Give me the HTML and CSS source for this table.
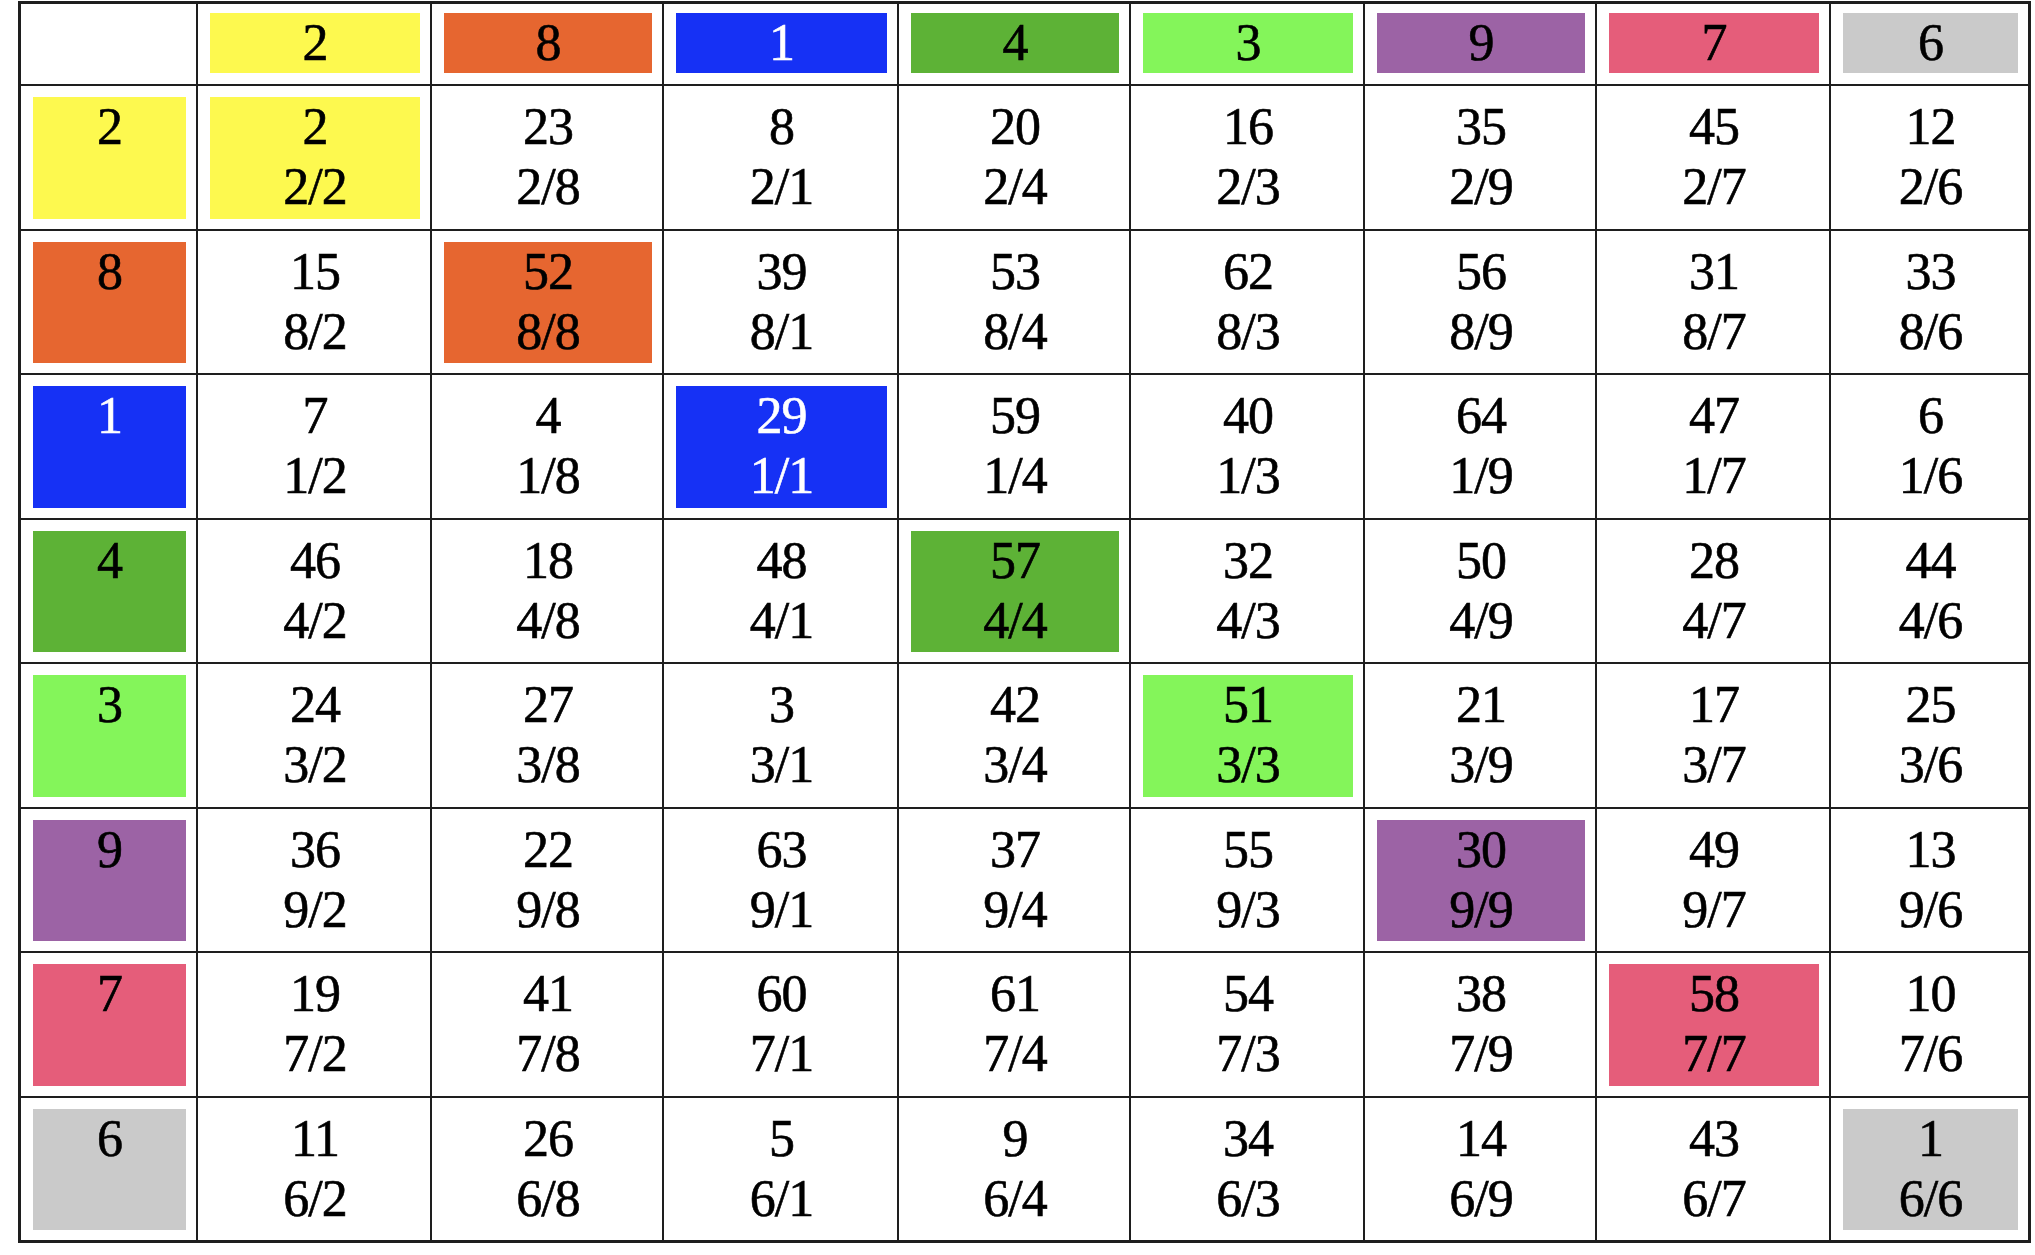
FILE: index.html
```html
<!DOCTYPE html>
<html>
<head>
<meta charset="utf-8">
<title>Table</title>
<link rel="stylesheet" href="styles.css">
</head>
<body>
<div class="grid">
  <div class="cell head"></div>
  <div class="cell head"><div class="box c2">2</div></div>
  <div class="cell head"><div class="box c8">8</div></div>
  <div class="cell head"><div class="box c1">1</div></div>
  <div class="cell head"><div class="box c4">4</div></div>
  <div class="cell head"><div class="box c3">3</div></div>
  <div class="cell head"><div class="box c9">9</div></div>
  <div class="cell head"><div class="box c7">7</div></div>
  <div class="cell head"><div class="box c6">6</div></div>

  <div class="cell"><div class="box c2">2</div></div>
  <div class="cell"><div class="box c2">2<br>2/2</div></div>
  <div class="cell"><div class="box">23<br>2/8</div></div>
  <div class="cell"><div class="box">8<br>2/1</div></div>
  <div class="cell"><div class="box">20<br>2/4</div></div>
  <div class="cell"><div class="box">16<br>2/3</div></div>
  <div class="cell"><div class="box">35<br>2/9</div></div>
  <div class="cell"><div class="box">45<br>2/7</div></div>
  <div class="cell"><div class="box">12<br>2/6</div></div>

  <div class="cell"><div class="box c8">8</div></div>
  <div class="cell"><div class="box">15<br>8/2</div></div>
  <div class="cell"><div class="box c8">52<br>8/8</div></div>
  <div class="cell"><div class="box">39<br>8/1</div></div>
  <div class="cell"><div class="box">53<br>8/4</div></div>
  <div class="cell"><div class="box">62<br>8/3</div></div>
  <div class="cell"><div class="box">56<br>8/9</div></div>
  <div class="cell"><div class="box">31<br>8/7</div></div>
  <div class="cell"><div class="box">33<br>8/6</div></div>

  <div class="cell"><div class="box c1">1</div></div>
  <div class="cell"><div class="box">7<br>1/2</div></div>
  <div class="cell"><div class="box">4<br>1/8</div></div>
  <div class="cell"><div class="box c1">29<br>1/1</div></div>
  <div class="cell"><div class="box">59<br>1/4</div></div>
  <div class="cell"><div class="box">40<br>1/3</div></div>
  <div class="cell"><div class="box">64<br>1/9</div></div>
  <div class="cell"><div class="box">47<br>1/7</div></div>
  <div class="cell"><div class="box">6<br>1/6</div></div>

  <div class="cell"><div class="box c4">4</div></div>
  <div class="cell"><div class="box">46<br>4/2</div></div>
  <div class="cell"><div class="box">18<br>4/8</div></div>
  <div class="cell"><div class="box">48<br>4/1</div></div>
  <div class="cell"><div class="box c4">57<br>4/4</div></div>
  <div class="cell"><div class="box">32<br>4/3</div></div>
  <div class="cell"><div class="box">50<br>4/9</div></div>
  <div class="cell"><div class="box">28<br>4/7</div></div>
  <div class="cell"><div class="box">44<br>4/6</div></div>

  <div class="cell"><div class="box c3">3</div></div>
  <div class="cell"><div class="box">24<br>3/2</div></div>
  <div class="cell"><div class="box">27<br>3/8</div></div>
  <div class="cell"><div class="box">3<br>3/1</div></div>
  <div class="cell"><div class="box">42<br>3/4</div></div>
  <div class="cell"><div class="box c3">51<br>3/3</div></div>
  <div class="cell"><div class="box">21<br>3/9</div></div>
  <div class="cell"><div class="box">17<br>3/7</div></div>
  <div class="cell"><div class="box">25<br>3/6</div></div>

  <div class="cell"><div class="box c9">9</div></div>
  <div class="cell"><div class="box">36<br>9/2</div></div>
  <div class="cell"><div class="box">22<br>9/8</div></div>
  <div class="cell"><div class="box">63<br>9/1</div></div>
  <div class="cell"><div class="box">37<br>9/4</div></div>
  <div class="cell"><div class="box">55<br>9/3</div></div>
  <div class="cell"><div class="box c9">30<br>9/9</div></div>
  <div class="cell"><div class="box">49<br>9/7</div></div>
  <div class="cell"><div class="box">13<br>9/6</div></div>

  <div class="cell"><div class="box c7">7</div></div>
  <div class="cell"><div class="box">19<br>7/2</div></div>
  <div class="cell"><div class="box">41<br>7/8</div></div>
  <div class="cell"><div class="box">60<br>7/1</div></div>
  <div class="cell"><div class="box">61<br>7/4</div></div>
  <div class="cell"><div class="box">54<br>7/3</div></div>
  <div class="cell"><div class="box">38<br>7/9</div></div>
  <div class="cell"><div class="box c7">58<br>7/7</div></div>
  <div class="cell"><div class="box">10<br>7/6</div></div>

  <div class="cell"><div class="box c6">6</div></div>
  <div class="cell"><div class="box">11<br>6/2</div></div>
  <div class="cell"><div class="box">26<br>6/8</div></div>
  <div class="cell"><div class="box">5<br>6/1</div></div>
  <div class="cell"><div class="box">9<br>6/4</div></div>
  <div class="cell"><div class="box">34<br>6/3</div></div>
  <div class="cell"><div class="box">14<br>6/9</div></div>
  <div class="cell"><div class="box">43<br>6/7</div></div>
  <div class="cell"><div class="box c6">1<br>6/6</div></div>
</div>
</body>
</html>
```

FILE: styles.css
```css
html, body {
  margin: 0;
  padding: 0;
  background: #ffffff;
}

body {
  padding: 1px 0 0 18px;
  font-family: "Liberation Serif", "Times New Roman", serif;
  font-size: 52px;
  line-height: 60px;
  color: #000000;
}

.grid {
  display: inline-grid;
  grid-template-columns: 175px 232px 230px 233px 230px 232px 230px 232px 197px;
  grid-template-rows: 80px 143px 142px 143px 142px 143px 142px 143px 142px;
  gap: 2px;
  background: #1e1e1e;
  border: 3px solid #1e1e1e;
}

.cell {
  background: #ffffff;
  display: flex;
  padding: 11px 10px 10px 12px;
}

.cell.head {
  padding: 9px 10px 11px 12px;
}

.box {
  flex: 1;
  text-align: center;
  -webkit-text-stroke: 0.6px currentColor;
  letter-spacing: -1px;
}

.c2 { background: #fdf94f; }
.c8 { background: #e66630; }
.c1 { background: #1631f5; color: #ffffff; }
.c4 { background: #5db236; }
.c3 { background: #84f55a; }
.c9 { background: #9c63a5; }
.c7 { background: #e55d7a; }
.c6 { background: #cacaca; }
```
